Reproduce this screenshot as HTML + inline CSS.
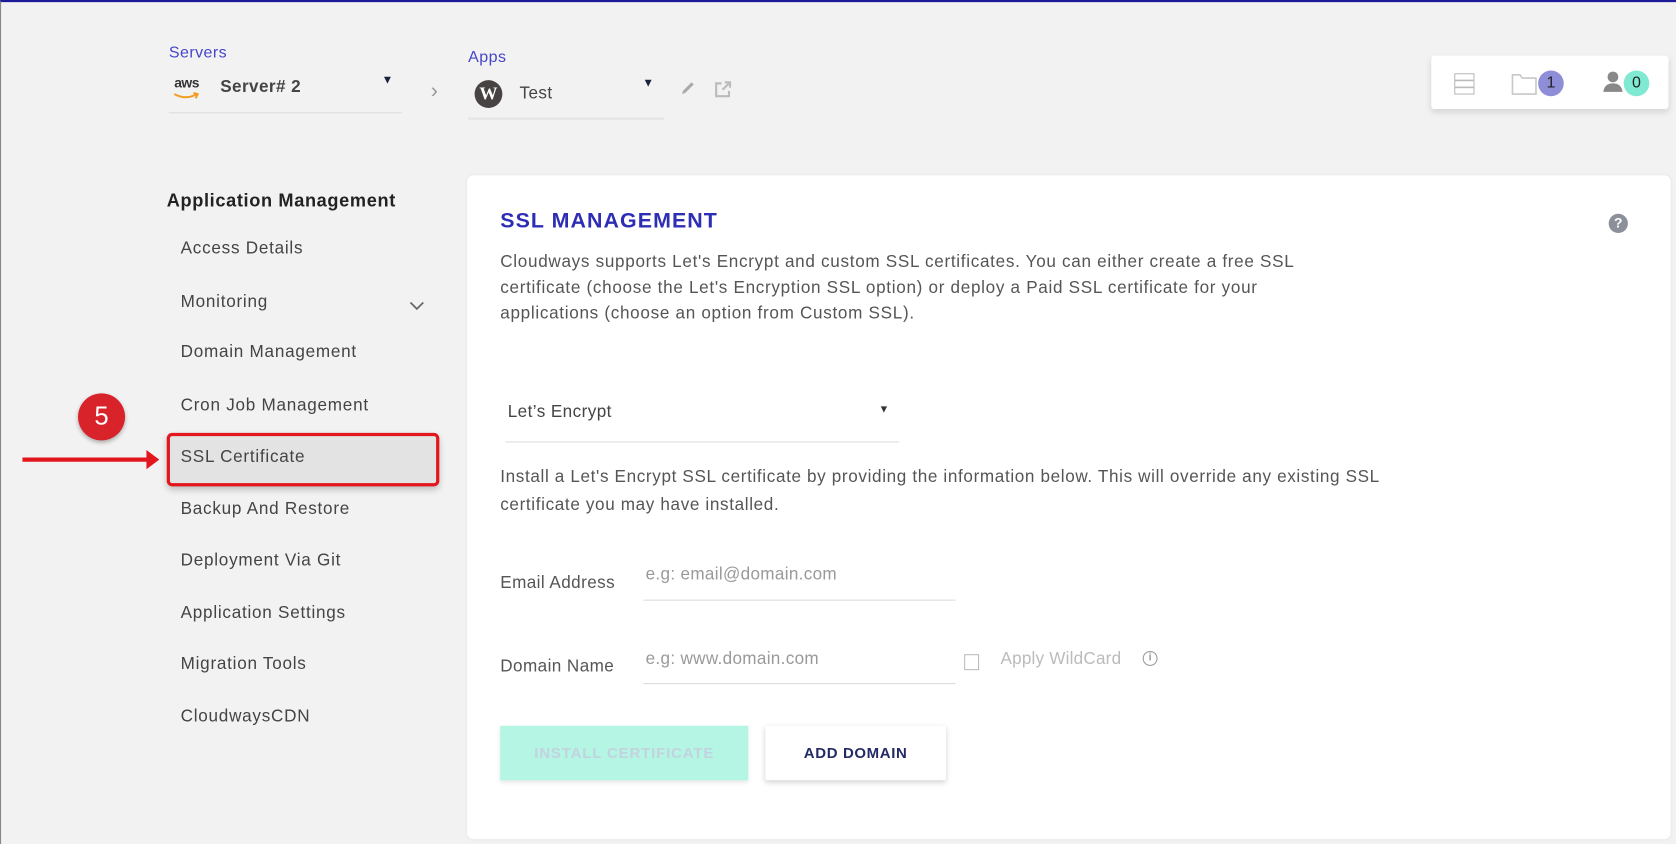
<!DOCTYPE html>
<html><head><meta charset="utf-8"><style>
*{margin:0;padding:0;box-sizing:border-box}
html,body{width:1676px;height:844px;overflow:hidden;background:#f2f2f2}
#w{position:absolute;left:0;top:0;width:1568px;height:790px;transform:scale(1.06888);transform-origin:0 0;font-family:"Liberation Sans",sans-serif;background:#f2f2f2;border-left:1px solid #888;border-top:2px solid #1c1c9a}
.a{position:absolute;white-space:nowrap}
.nav{font-size:16px;color:#444;left:168px;letter-spacing:0.7px}
.lbl{font-size:16px;color:#555;letter-spacing:0.4px}
.ph{font-size:16px;color:#999;letter-spacing:0.3px}
.ul{position:absolute;height:1px;background:#ddd}
</style></head><body><div id="w">
<div class="a" style="left:157px;top:39px;font-size:15px;color:#4646c8;letter-spacing:0.4px">Servers</div>
<div class="a" style="left:162px;top:68px;font-size:13px;color:#333;font-weight:bold;letter-spacing:-0.5px">aws</div>
<svg class="a" style="left:161px;top:84px" width="24" height="8"><path d="M1 2 Q12 8 22 2 M19 1 L23 2 L21 6" stroke="#f29b1d" stroke-width="1.8" fill="none"/></svg>
<div class="a" style="left:205px;top:71px;font-size:16px;color:#444;font-weight:bold;letter-spacing:0.4px">Server# 2</div>
<div class="a" style="left:356px;top:67px;font-size:11px;color:#1c2140">▼</div>
<div class="ul" style="left:157px;top:103px;width:218px"></div>
<div class="a" style="left:402px;top:72px;font-size:20px;color:#999">›</div>
<div class="a" style="left:437px;top:43px;font-size:15px;color:#4646c8;letter-spacing:0.4px">Apps</div>
<div class="a" style="left:443px;top:73px;width:26px;height:26px;border-radius:50%;background:#464342;color:#fff;font:bold 17px 'Liberation Serif',serif;text-align:center;line-height:26px">W</div>
<div class="a" style="left:485px;top:77px;font-size:16px;color:#444;letter-spacing:0.4px">Test</div>
<div class="a" style="left:600px;top:70px;font-size:11px;color:#1c2140">▼</div>
<div class="ul" style="left:437px;top:108px;width:183px;height:2px;background:#e4e4e4"></div>
<svg class="a" style="left:634px;top:73px" width="16" height="16"><path d="M3 13 L4 10 L12 2 L14 4 L6 12 Z" fill="#aaa"/></svg>
<svg class="a" style="left:666px;top:73px" width="18" height="18"><path d="M8 3 H3 V15 H15 V10" stroke="#bbb" stroke-width="2" fill="none"/><path d="M9 9 L15 3 M11 2 H16 V7" stroke="#bbb" stroke-width="2" fill="none"/></svg>
<div class="a" style="left:1338px;top:50px;width:222px;height:50px;background:#fff;border-radius:3px;box-shadow:0 3px 6px rgba(0,0,0,.12)"></div>
<svg class="a" style="left:1359px;top:66px" width="20" height="22"><rect x="1" y="1" width="18" height="6" fill="none" stroke="#bbb"/><rect x="1" y="7.5" width="18" height="6" fill="none" stroke="#bbb"/><rect x="1" y="14" width="18" height="6" fill="none" stroke="#bbb"/></svg>
<svg class="a" style="left:1413px;top:65px" width="24" height="22"><path d="M1 3 H8 L10 6 H23 V21 H1 Z" fill="none" stroke="#c8c8c8" stroke-width="1.5"/></svg>
<div class="a" style="left:1438px;top:64px;width:24px;height:24px;border-radius:50%;background:#8e8ed8;color:#222;font-size:15px;text-align:center;line-height:24px">1</div>
<svg class="a" style="left:1498px;top:64px" width="20" height="22"><circle cx="10" cy="6" r="5" fill="#888"/><path d="M1 20 Q2 12 10 12 Q18 12 19 20 Z" fill="#888"/></svg>
<div class="a" style="left:1518px;top:64px;width:24px;height:24px;border-radius:50%;background:#7fe9d2;color:#222;font-size:15px;text-align:center;line-height:24px">0</div>
<div class="a" style="left:155px;top:176px;font-size:17px;color:#222;font-weight:bold;letter-spacing:0.6px">Application Management</div>
<div class="a nav" style="top:222px">Access Details</div>
<div class="a nav" style="top:272px">Monitoring</div>
<svg class="a" style="left:381px;top:278px" width="16" height="12"><path d="M2 3 L8 9 L14 3" stroke="#666" stroke-width="1.6" fill="none"/></svg>
<div class="a nav" style="top:319px">Domain Management</div>
<div class="a nav" style="top:369px">Cron Job Management</div>
<div class="a" style="left:155px;top:403px;width:255px;height:50px;border:3px solid #e2161c;border-radius:5px;background:#e3e3e3;box-shadow:0 3px 6px rgba(0,0,0,.2)"></div>
<div class="a nav" style="top:417px">SSL Certificate</div>
<div class="a nav" style="top:466px">Backup And Restore</div>
<div class="a nav" style="top:514px">Deployment Via Git</div>
<div class="a nav" style="top:563px">Application Settings</div>
<div class="a nav" style="top:611px">Migration Tools</div>
<div class="a nav" style="top:660px">CloudwaysCDN</div>
<div class="a" style="left:72px;top:366px;width:44px;height:44px;border-radius:50%;background:#d8232a;color:#fff;font-size:24px;text-align:center;line-height:44px;box-shadow:0 2px 4px rgba(0,0,0,.3)">5</div>
<svg class="a" style="left:18px;top:416px" width="130" height="24"><path d="M2 12 H120" stroke="#e2161c" stroke-width="4"/><path d="M118 3 L130 12 L118 21 Z" fill="#e2161c"/></svg>
<div class="a" style="left:436px;top:162px;width:1126px;height:621px;background:#fff;border-radius:6px;box-shadow:0 0 3px rgba(0,0,0,.06)"></div>
<div class="a" style="left:467px;top:194px;font-size:20px;color:#2e2eb4;font-weight:bold;letter-spacing:1px">SSL MANAGEMENT</div>
<div class="a" style="left:1504px;top:198px;width:18px;height:18px;border-radius:50%;background:#8b909a;color:#fff;font-size:13px;font-weight:bold;text-align:center;line-height:18px">?</div>
<div class="a" style="left:467px;top:232px;font-size:16px;color:#555;line-height:24px;letter-spacing:0.65px">Cloudways supports Let's Encrypt and custom SSL certificates. You can either create a free SSL<br>certificate (choose the Let's Encryption SSL option) or deploy a Paid SSL certificate for your<br>applications (choose an option from Custom SSL).</div>
<div class="a" style="left:474px;top:375px;font-size:16px;color:#444;letter-spacing:0.4px">Let’s Encrypt</div>
<div class="a" style="left:821px;top:376px;font-size:10px;color:#333">▼</div>
<div class="ul" style="left:472px;top:411px;width:368px"></div>
<div class="a" style="left:467px;top:432px;font-size:16px;color:#555;line-height:26px;letter-spacing:0.6px">Install a Let's Encrypt SSL certificate by providing the information below. This will override any existing SSL<br>certificate you may have installed.</div>
<div class="a lbl" style="left:467px;top:535px">Email Address</div>
<div class="a ph" style="left:603px;top:527px">e.g: email@domain.com</div>
<div class="ul" style="left:601px;top:559px;width:292px"></div>
<div class="a lbl" style="left:467px;top:613px">Domain Name</div>
<div class="a ph" style="left:603px;top:606px">e.g: www.domain.com</div>
<div class="ul" style="left:601px;top:637px;width:292px"></div>
<div class="a" style="left:901px;top:610px;width:14px;height:15px;border:1px solid #bbb"></div>
<div class="a" style="left:935px;top:606px;font-size:16px;color:#bbb;letter-spacing:0.2px">Apply WildCard</div>
<div class="a" style="left:1068px;top:607px;width:14px;height:14px;border:1.5px solid #999;border-radius:50%;font-size:10px;color:#999;text-align:center;line-height:11px;font-weight:bold">i</div>
<div class="a" style="left:467px;top:677px;width:232px;height:51px;background:#b4f5e4;box-shadow:0 2px 4px rgba(0,0,0,.1);color:#c4d2e0;font-size:14px;font-weight:bold;text-align:center;line-height:51px;letter-spacing:0.8px">INSTALL CERTIFICATE</div>
<div class="a" style="left:715px;top:677px;width:169px;height:51px;background:#fff;box-shadow:0 2px 5px rgba(0,0,0,.18);color:#232a64;font-size:14px;font-weight:bold;text-align:center;line-height:51px;border-radius:2px;letter-spacing:0.6px">ADD DOMAIN</div>
</div></body></html>
